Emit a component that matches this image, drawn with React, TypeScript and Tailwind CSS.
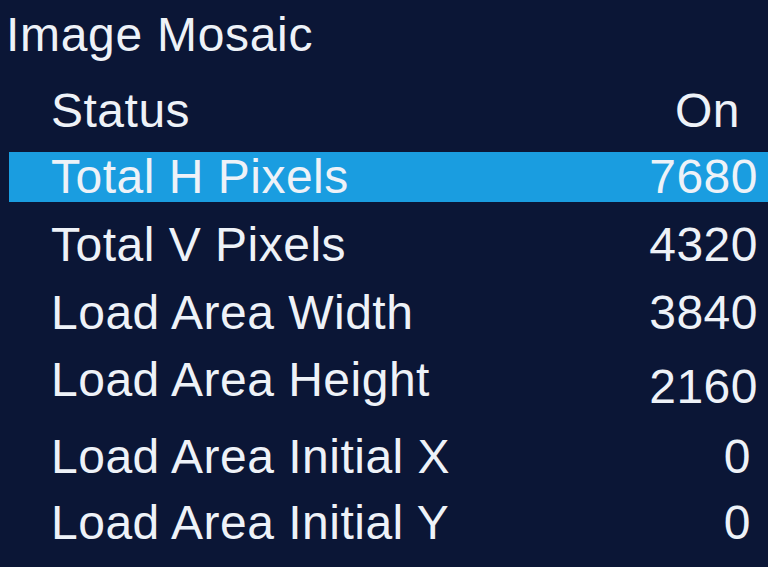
const rows: { label: string; value: string; h: string; pr: string; active?: boolean; shift?: string }[] = [
  { label: "Status", value: "On", h: "h-[82px]", pr: "pr-[28px]" },
  { label: "Total H Pixels", value: "7680", h: "h-[50px]", pr: "pr-[10px]", active: true },
  { label: "Total V Pixels", value: "4320", h: "h-[86px]", pr: "pr-[10px]" },
  { label: "Load Area Width", value: "3840", h: "h-[50px]", pr: "pr-[10px]" },
  { label: "Load Area Height", value: "2160", h: "h-[84px]", pr: "pr-[10px]", shift: "translate-y-[7px]" },
  { label: "Load Area Initial X", value: "0", h: "h-[70px]", pr: "pr-[17px]" },
  { label: "Load Area Initial Y", value: "0", h: "h-[62px]", pr: "pr-[17px]" },
];

export default function App() {
  return (
    <div
      className="w-[768px] h-[567px] overflow-hidden bg-[#0b1636] text-[#eef2f8]"
      style={{ fontFamily: '"Liberation Sans", Arial, sans-serif' }}
    >
      <div className="h-[70px] pl-[6px] pt-[8px] text-[48px] leading-[54px] tracking-[0.7px]">Image Mosaic</div>
      <div className="flex flex-col">
        {rows.map((r) => (
          <div
            key={r.label}
            className={`flex items-center justify-between ml-[9px] pl-[42px] text-[48px] leading-none tracking-[0.5px] ${r.h} ${r.pr} ${
              r.active ? "bg-[#1a9de0]" : ""
            }`}
          >
            <span>{r.label}</span>
            <span className={r.shift ?? ""}>{r.value}</span>
          </div>
        ))}
      </div>
    </div>
  );
}
